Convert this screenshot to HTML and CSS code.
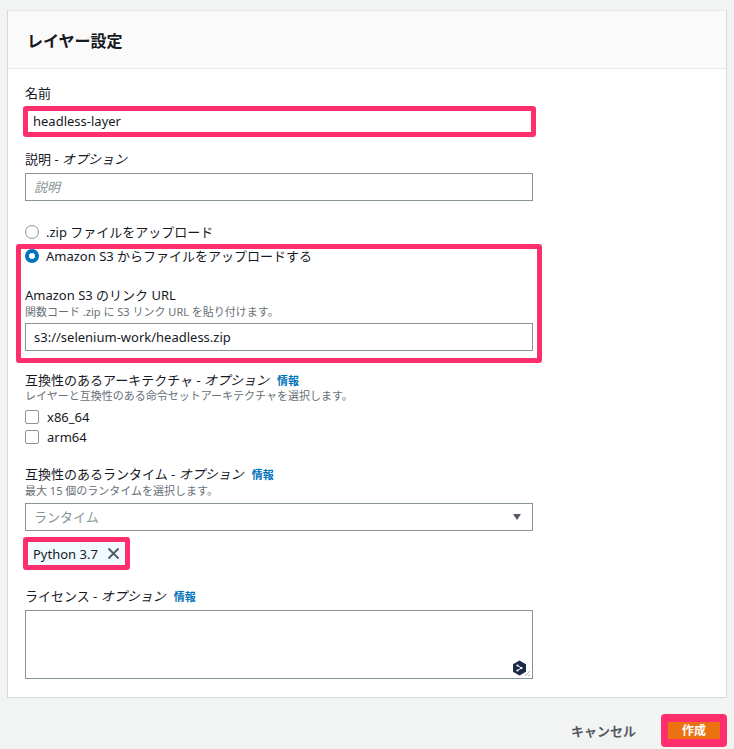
FILE: index.html
```html
<!doctype html>
<html>
<head>
<meta charset="utf-8">
<title>レイヤー設定</title>
<link rel="stylesheet" href="styles.css">
</head>
<body>
<div class="panel">
  <div class="panel-head"><h2>レイヤー設定</h2></div>
  <div class="panel-body">
    <div class="label l-name">名前</div>
    <div class="mark mark-name"><div class="val">headless-layer</div></div>

    <div class="label l-desc">説明 - <i>オプション</i></div>
    <div class="input desc"><i class="ph">説明</i></div>

    <div class="radio-row zip"><span class="radio"></span>.zip ファイルをアップロード</div>
    <div class="mark mark-s3">
      <div class="radio-row s3"><span class="radio on"></span>Amazon S3 からファイルをアップロードする</div>
      <div class="label l-url">Amazon S3 のリンク URL</div>
      <div class="hint">関数コード .zip に S3 リンク URL を貼り付けます。</div>
      <div class="input url">s3://selenium-work/headless.zip</div>
    </div>

    <div class="label l-arch">互換性のあるアーキテクチャ - <i>オプション</i><a class="info">情報</a></div>
    <div class="hint h-arch">レイヤーと互換性のある命令セットアーキテクチャを選択します。</div>
    <div class="check-row c1"><span class="check"></span>x86_64</div>
    <div class="check-row"><span class="check"></span>arm64</div>

    <div class="label l-rt">互換性のあるランタイム - <i>オプション</i><a class="info">情報</a></div>
    <div class="hint">最大 15 個のランタイムを選択します。</div>
    <div class="input select"><span class="ph">ランタイム</span><span class="caret"></span></div>
    <div class="mark mark-token">
      <div class="token">Python 3.7
        <svg width="13" height="13" viewBox="0 0 13 13"><path d="M1.5 1.5l10 10M11.5 1.5l-10 10" stroke="#545b64" stroke-width="1.8" fill="none"/></svg>
      </div>
    </div>

    <div class="label l-lic">ライセンス - <i>オプション</i><a class="info">情報</a></div>
    <div class="input area">
      <svg class="ext" width="15" height="16" viewBox="0 0 15 16">
        <path d="M7.5 0.5l6.5 3.7v7.6l-6.5 3.7l-6.5-3.7v-7.6z" fill="#1b2a47"/>
        <path d="M5.5 5.5l4 2.5l-4 2.5" stroke="#fff" stroke-width="1" fill="none"/>
        <circle cx="5.5" cy="5.5" r="1.1" fill="#fff"/><circle cx="9.5" cy="8" r="1.1" fill="#fff"/><circle cx="5.5" cy="10.5" r="1.1" fill="#fff"/>
      </svg>
      <svg class="grip" width="7" height="7" viewBox="0 0 7 7"><path d="M6 1L1 6M6 4L4 6" stroke="#999" stroke-width="0.8"/></svg>
    </div>
  </div>
</div>
<div class="footer">
  <span class="cancel">キャンセル</span>
  <div class="mark-btn"><div class="btn">作成</div></div>
</div>
</body>
</html>
```
FILE: styles.css
```css
body { margin:0; background:#f2f3f3; font-family:"Noto Sans","Noto Sans CJK JP",sans-serif; color:#16191f; font-size:13px; }
i { font-style:italic; }

.panel { margin:10px 7px 0 7px; background:#fff; border:1px solid #d5dbdb; border-top-color:#e4e8e8; }
.panel-head { height:57px; background:#fafafa; border-bottom:1px solid #e4e8e8; display:flex; align-items:center; padding-left:19px; }
.panel-head h2 { margin:0; font-size:16px; font-weight:bold; font-family:"Noto Sans CJK JP",sans-serif; }
.panel-body { padding:14px 0 18px 17px; }

.label { height:20px; line-height:20px; font-size:13px; }
.hint { height:14px; line-height:14px; font-size:11px; color:#687078; }
.info { color:#0073bb; font-weight:bold; font-size:11px; margin-left:8px; }

.input { height:26px; border:1px solid #879596; line-height:26px; padding-left:8px; width:498px; font-size:13px; }
.ph { color:#879596; }

.mark { border:5px solid #ff2f6d; border-radius:3px; }
.mark-name { margin:3px 0 0 -2px; width:503px; height:21px; }
.mark-name .val { line-height:21px; padding-left:5px; font-size:13px; }

.l-desc { margin-top:12px; }
.desc { margin-top:4px; }

.radio-row { height:20px; line-height:20px; display:flex; align-items:center; font-size:13px; }
.radio { width:12px; height:12px; border:1px solid #879596; border-radius:50%; margin-right:7px; flex-shrink:0; }
.radio.on { width:6px; height:6px; border:4px solid #0073bb; }
.zip { margin-top:21px; }

.mark-s3 { margin:2px 0 0 -9px; width:508px; padding:0 4px 7px 4px; }
.s3 { margin-top:-3px; }
.l-url { margin-top:19px; }
.url { margin-top:4px; }

.l-arch { margin-top:7px; }
.h-arch { margin-top:-1px; }
.check-row { height:20px; line-height:20px; display:flex; align-items:center; font-size:13px; }
.check { width:12px; height:12px; border:1px solid #879596; border-radius:2px; margin-right:8px; }
.c1 { margin-top:4px; }

.l-rt { margin-top:17px; }
.select { margin-top:5px; position:relative; }
.caret { position:absolute; right:11px; top:10px; width:0; height:0; border-left:4px solid transparent; border-right:4px solid transparent; border-top:6px solid #545b64; }

.mark-token { margin:6px 0 0 -2px; display:inline-block; }
.token { background:#f1faff; height:23px; display:flex; align-items:center; padding:0 5px; gap:9px; font-size:13px; }

.l-lic { margin-top:16px; }
.area { margin-top:4px; height:67px; position:relative; }
.ext { position:absolute; right:5px; bottom:2px; }
.grip { position:absolute; right:1px; bottom:1px; }

.footer { display:flex; justify-content:flex-end; align-items:center; margin-top:16px; padding-right:7px; }
.cancel { font-weight:bold; color:#545b64; font-size:13px; margin-right:25px; }
.mark-btn { background:#ff2f6d; border-radius:4px; padding:8px 7px; }
.btn { width:52px; height:17px; background:#ec7211; color:#fff; font-weight:bold; font-size:12px; line-height:17px; text-align:center; }
```
